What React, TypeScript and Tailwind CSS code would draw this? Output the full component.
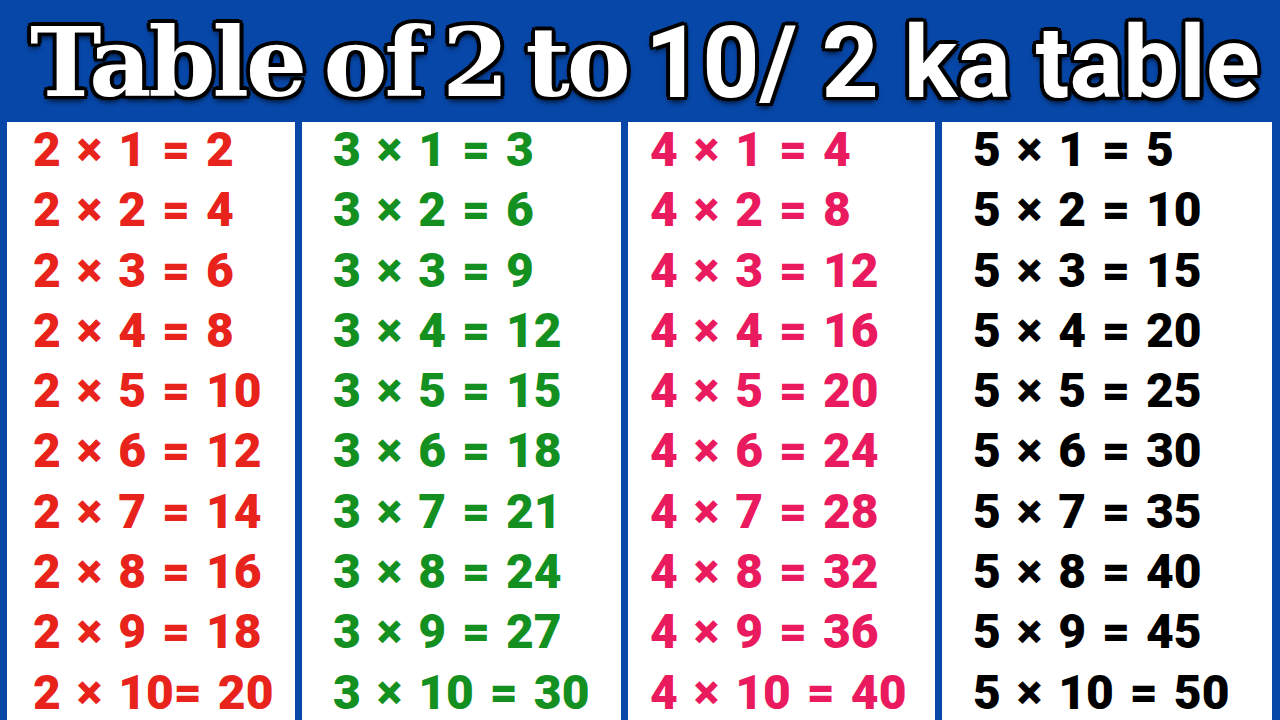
const tables = [
  { n: 2, color: 'text-[#e8231c]', width: 'w-[288px]', pad: 'pl-[26px]' },
  { n: 3, color: 'text-[#13901f]', width: 'w-[319px]', pad: 'pl-[31px]' },
  { n: 4, color: 'text-[#ea1a5e]', width: 'w-[307px]', pad: 'pl-[22px]' },
  { n: 5, color: 'text-[#000000]', width: 'w-[330px]', pad: 'pl-[31px]' },
];

const outline =
  '[text-shadow:3px_3px_0_#000,-3px_-3px_0_#000,3px_-3px_0_#000,-3px_3px_0_#000,0_4px_6px_#000,4px_0_0_#000,-4px_0_0_#000,0_-4px_0_#000]';

export default function App() {
  return (
    <div className="w-[1280px] h-[720px] overflow-hidden bg-[#0747a8] flex flex-col">
      {/* Title */}
      <div className="h-[122px] shrink-0 flex items-center pl-[30px] pt-[4px] text-white whitespace-nowrap">
        <span className={`font-['DejaVu_Serif',serif] font-bold text-[96px] leading-none tracking-[-3px] [word-spacing:-11px] ${outline}`}>
          Table of 2 to
        </span>
        <span className={`ml-[17px] font-['Roboto',sans-serif] font-bold text-[100px] leading-none tracking-[0px] ${outline}`}>
          10/ 2 ka table
        </span>
      </div>

      {/* Tables */}
      <div className="flex-1 flex gap-[7px] pl-[7px] pr-[8px]">
        {tables.map((t) => (
          <div key={t.n} className={`${t.width} bg-white ${t.pad}`}>
            <div className={`-mt-[2px] font-['Roboto',sans-serif] font-black text-[48px] leading-[60.3px] [word-spacing:4px] ${t.color} whitespace-nowrap`}>
              {Array.from({ length: 10 }, (_, i) => i + 1).map((i) => (
                <div key={i}>
                  {t.n === 2 && i === 10
                    ? `${t.n} × ${i}= ${t.n * i}`
                    : `${t.n} × ${i} = ${t.n * i}`}
                </div>
              ))}
            </div>
          </div>
        ))}
      </div>
    </div>
  );
}
